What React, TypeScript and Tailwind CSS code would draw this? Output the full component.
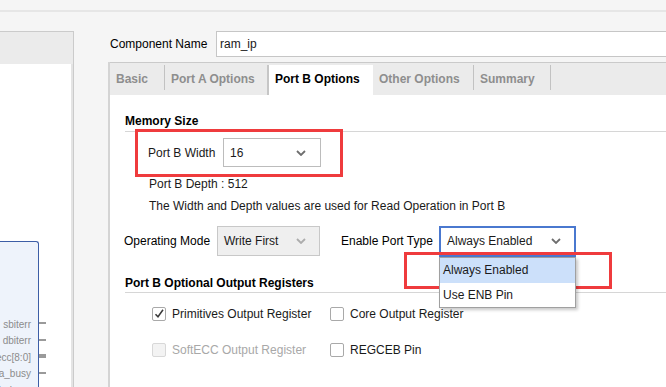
import React from 'react';

const Chevron = ({ color }: { color: string }) => (
    <svg width="10" height="6" viewBox="0 0 10 6" fill="none">
        <path d="M1 1 L5 5 L9 1" stroke={color} strokeWidth="1.8" />
    </svg>
);

const Checkbox = ({ checked, disabled }: { checked?: boolean; disabled?: boolean }) => (
    <div
        className={
            disabled
                ? 'w-[14px] h-[14px] rounded-[2px] border border-[#d8d8d8] bg-[#f3f3f3]'
                : 'w-[14px] h-[14px] rounded-[2px] border border-[#a9a9a9] bg-white'
        }
    >
        {checked && (
            <svg width="12" height="12" viewBox="0 0 12 12" fill="none">
                <path d="M2.5 6.2 L5 8.8 L10 1.8" stroke="#3a3a3a" strokeWidth="1.5" />
            </svg>
        )}
    </div>
);

const TABS = [
    { label: 'Basic', w: 'w-[55px]', sep: true },
    { label: 'Port A Options', w: 'w-[102px]', sep: false },
    { label: 'Port B Options', w: 'w-[106px]', active: true },
    { label: 'Other Options', w: 'w-[101px]', sep: true },
    { label: 'Summary', w: 'w-[77px]', sep: true },
];

const PINS = [
    { name: 'sbiterr', bus: false },
    { name: 'dbiterr', bus: false },
    { name: 'rdaddrecc[8:0]', bus: true },
    { name: 'rsta_busy', bus: false },
    { name: 'rstb_busy', bus: false },
];

function LeftPanel() {
    return (
        <div className="w-[74px] h-full flex flex-col border-t border-r border-[#cbcbcb]">
            <div className="h-[32px] bg-[#ebebeb]" />
            <div className="flex-1 bg-white border-r-2 border-[#e4e4e4] overflow-hidden">
                <div className="mt-[177px] flex">
                    <div className="w-[39px] h-[200px] shrink-0 bg-[#eef3fb] border-t border-r border-[#3d5ea6] rounded-tr-[3px] pt-[74px] pr-[7px]">
                        {PINS.map((p) => (
                            <div key={p.name} className="h-[16.5px] flex items-center justify-end whitespace-nowrap text-[10px] text-[#8c8c8c]">
                                {p.name}
                            </div>
                        ))}
                    </div>
                    <div className="pt-[74px]">
                        {PINS.map((p) => (
                            <div key={p.name} className="h-[16.5px] flex items-center">
                                <div className={p.bus ? 'w-[7px] h-[4px] bg-[#9a9a9a]' : 'w-[7px] h-[2px] bg-[#9a9a9a]'} />
                            </div>
                        ))}
                    </div>
                </div>
            </div>
        </div>
    );
}

function Tabs() {
    return (
        <div className="h-[33px] bg-[#ebebeb] border-t border-[#cacaca] pt-[2px] flex">
            {TABS.map((t) =>
                t.active ? (
                    <div key={t.label} className={`${t.w} h-[30px] bg-white border-l-2 border-[#c6c6c6] pl-[6px] flex items-center pb-[2px] font-bold text-black`}>
                        {t.label}
                    </div>
                ) : (
                    <div key={t.label} className={`${t.w} h-[30px] flex items-start`}>
                        <div className="flex-1 h-[30px] pl-[6px] flex items-center pb-[2px] font-bold text-[#8e8e8e]">
                            {t.label}
                        </div>
                        {t.sep && <div className="w-px h-[25px] bg-[#c2c2c2]" />}
                    </div>
                )
            )}
        </div>
    );
}

function Content() {
    return (
        <div className="flex-1 bg-white">
            <div className="ml-[15px] h-[37px] pt-[19px] leading-[14px] font-bold text-black border-b border-[#d6d6d6]">
                Memory Size
            </div>
            <div className="mt-[6px] h-[29px] pl-[38px] flex items-center">
                <div className="w-[75px]">Port B Width</div>
                <div className="w-[98px] h-[29px] border border-[#bcbcbc] bg-white flex items-center justify-between pl-[6px] pr-[14px]">
                    <span>16</span>
                    <Chevron color="#6e6e6e" />
                </div>
            </div>
            <div className="pl-[39px] mt-[6px] h-[22px] leading-[22px]">Port B Depth : 512</div>
            <div className="pl-[39px] h-[22px] leading-[22px]">
                The Width and Depth values are used for Read Operation in Port B
            </div>
            <div className="mt-[9px] h-[30px] pl-[14px] flex items-center">
                <div className="w-[93px] text-black">Operating Mode</div>
                <div className="w-[103px] h-[30px] border border-[#c8c8c8] bg-[#efefef] flex items-center justify-between pl-[6px] pr-[13px]">
                    <span>Write First</span>
                    <Chevron color="#acacac" />
                </div>
                <div className="ml-[21px] w-[98px] text-black">Enable Port Type</div>
                <div className="relative w-[137px] h-[31px]">
                    <div className="w-full h-full border-2 border-[#4a78cf] bg-white flex items-center justify-between pl-[6px] pr-[13px]">
                        <span>Always Enabled</span>
                        <Chevron color="#6e6e6e" />
                    </div>
                    <div className="absolute z-20 left-0 top-[31px] w-[137px] border border-[#a0a0a0] bg-white shadow-[2px_2px_3px_rgba(0,0,0,0.22)]">
                        <div className="h-[25px] bg-[#cce0fa] pl-[3px] flex items-center">Always Enabled</div>
                        <div className="h-[24px] pl-[3px] flex items-center">Use ENB Pin</div>
                    </div>
                </div>
            </div>
            <div className="ml-[15px] h-[37px] pt-[20px] leading-[14px] font-bold text-black border-b border-[#d6d6d6]">
                Port B Optional Output Registers
            </div>
            <div className="mt-[3px] pl-[42px]">
                <div className="h-[36px] flex items-center">
                    <div className="w-[178px] flex items-center gap-[6px]">
                        <Checkbox checked />
                        <span>Primitives Output Register</span>
                    </div>
                    <div className="flex items-center gap-[6px]">
                        <Checkbox />
                        <span>Core Output Register</span>
                    </div>
                </div>
                <div className="h-[36px] flex items-center">
                    <div className="w-[178px] flex items-center gap-[6px]">
                        <Checkbox disabled />
                        <span className="text-[#a8a8a8]">SoftECC Output Register</span>
                    </div>
                    <div className="flex items-center gap-[6px]">
                        <Checkbox />
                        <span>REGCEB Pin</span>
                    </div>
                </div>
            </div>
        </div>
    );
}

export default function App() {
    return (
        <div className="relative w-[666px] h-[387px] overflow-hidden bg-[#f5f5f5] font-['Liberation_Sans',Arial,sans-serif] text-[12px] text-[#1a1a1a]">
            <div className="h-[10px]" />
            <div className="h-[2px] bg-[#e6e6e6]" />
            <div className="h-[19px]" />
            <div className="flex h-[356px]">
                <LeftPanel />
                <div className="w-[34px]" />
                <div className="flex-1 flex flex-col min-w-0">
                    <div className="h-[26px] flex items-center">
                        <div className="w-[108px] pl-[2px] text-black">Component Name</div>
                        <div className="flex-1 h-[26px] -mr-[4px] border border-[#c6c6c6] bg-white pl-[3px] flex items-center">
                            ram_ip
                        </div>
                    </div>
                    <div className="h-[5px]" />
                    <div className="flex-1 flex flex-col border-l-2 border-[#d4d4d4]">
                        <Tabs />
                        <Content />
                    </div>
                </div>
            </div>
            <div className="absolute z-10 left-[135px] top-[129px] w-[208px] h-[48px] border-[3px] border-[#ef3b3d]" />
            <div className="absolute z-10 left-[404px] top-[252px] w-[208px] h-[37px] border-[3px] border-[#ef3b3d]" />
        </div>
    );
}
